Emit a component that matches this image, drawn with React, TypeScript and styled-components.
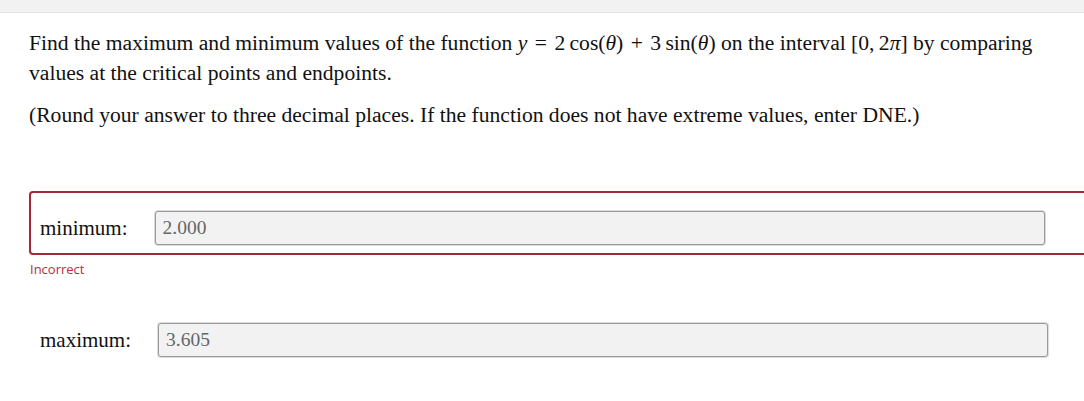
import React from 'react';
import styled, { createGlobalStyle } from 'styled-components';

const GlobalStyle = createGlobalStyle`
  html, body {
    margin: 0;
    padding: 0;
    background: #ffffff;
    overflow: hidden;
  }
`;

interface AnswerRow {
  label: string;
  value: string;
  incorrect?: boolean;
}

const rows: AnswerRow[] = [
  { label: 'minimum:', value: '2.000', incorrect: true },
  { label: 'maximum:', value: '3.605' },
];

const App = () => {
  return (
    <>
      <GlobalStyle />
      <St.Page>
        <St.TopBar />
        <St.Content>
          <St.Question>
            Find the maximum and minimum values of the function <St.Var>y</St.Var> <St.Op>=</St.Op> 2&#8201;cos(
            <St.Var>θ</St.Var>) <St.Op>+</St.Op> 3&#8201;sin(<St.Var>θ</St.Var>) on the interval [0,&#8201;2
            <St.Var>π</St.Var>] by comparing values at the critical points and endpoints.
          </St.Question>
          <St.Question>
            (Round your answer to three decimal places. If the function does not have extreme values, enter DNE.)
          </St.Question>

          <St.Answers>
            {rows.map((row) => (
              <St.AnswerBlock key={row.label}>
                <St.AnswerBox $incorrect={row.incorrect}>
                  <St.Label>{row.label}</St.Label>
                  <St.Input type='text' defaultValue={row.value} readOnly />
                </St.AnswerBox>
                {row.incorrect && <St.Feedback>Incorrect</St.Feedback>}
              </St.AnswerBlock>
            ))}
          </St.Answers>
        </St.Content>
      </St.Page>
    </>
  );
};

const St = {
  Page: styled.div`
    width: 1084px;
    height: 401px;
    font-family: 'Liberation Serif', 'Times New Roman', serif;
    color: #111111;
  `,

  TopBar: styled.div`
    height: 12px;
    background-color: #f2f2f2;
    border-bottom: 1px solid #e4e4e4;
  `,

  Content: styled.div`
    padding: 15px 0 0 29px;
  `,

  Question: styled.p`
    margin: 0 0 12px 0;
    max-width: 1030px;
    font-size: 21.6px;
    line-height: 30px;
  `,

  Var: styled.i`
    font-style: italic;
  `,

  Op: styled.span`
    padding: 0 2px;
  `,

  Answers: styled.div`
    display: flex;
    flex-direction: column;
    gap: 25px;
    margin-top: 61px;
    margin-right: -20px;
  `,

  AnswerBlock: styled.div`
    display: flex;
    flex-direction: column;
  `,

  AnswerBox: styled.div<{ $incorrect?: boolean }>`
    display: flex;
    align-items: center;
    gap: 27px;
    padding: 18px 9px 8px;
    border: 2px solid ${({ $incorrect }) => ($incorrect ? '#a5283a' : 'transparent')};
    border-radius: 4px;
  `,

  Label: styled.span`
    font-size: 21px;
    line-height: 24px;
  `,

  Input: styled.input`
    box-sizing: border-box;
    width: 890px;
    height: 34px;
    padding: 0 7px;
    margin: 0;
    background-color: #f2f2f2;
    border: 1px solid #9a9a9a;
    border-radius: 3px;
    box-shadow: 0 0 0 1px #dddddd;
    font-family: 'Liberation Serif', 'Times New Roman', serif;
    font-size: 19.5px;
    color: #666666;
    outline: none;
  `,

  Feedback: styled.span`
    margin-top: 5px;
    padding-left: 1px;
    font-family: 'Open Sans', 'Liberation Sans', sans-serif;
    font-size: 13px;
    color: #c1283b;
  `,
};

export default App;
